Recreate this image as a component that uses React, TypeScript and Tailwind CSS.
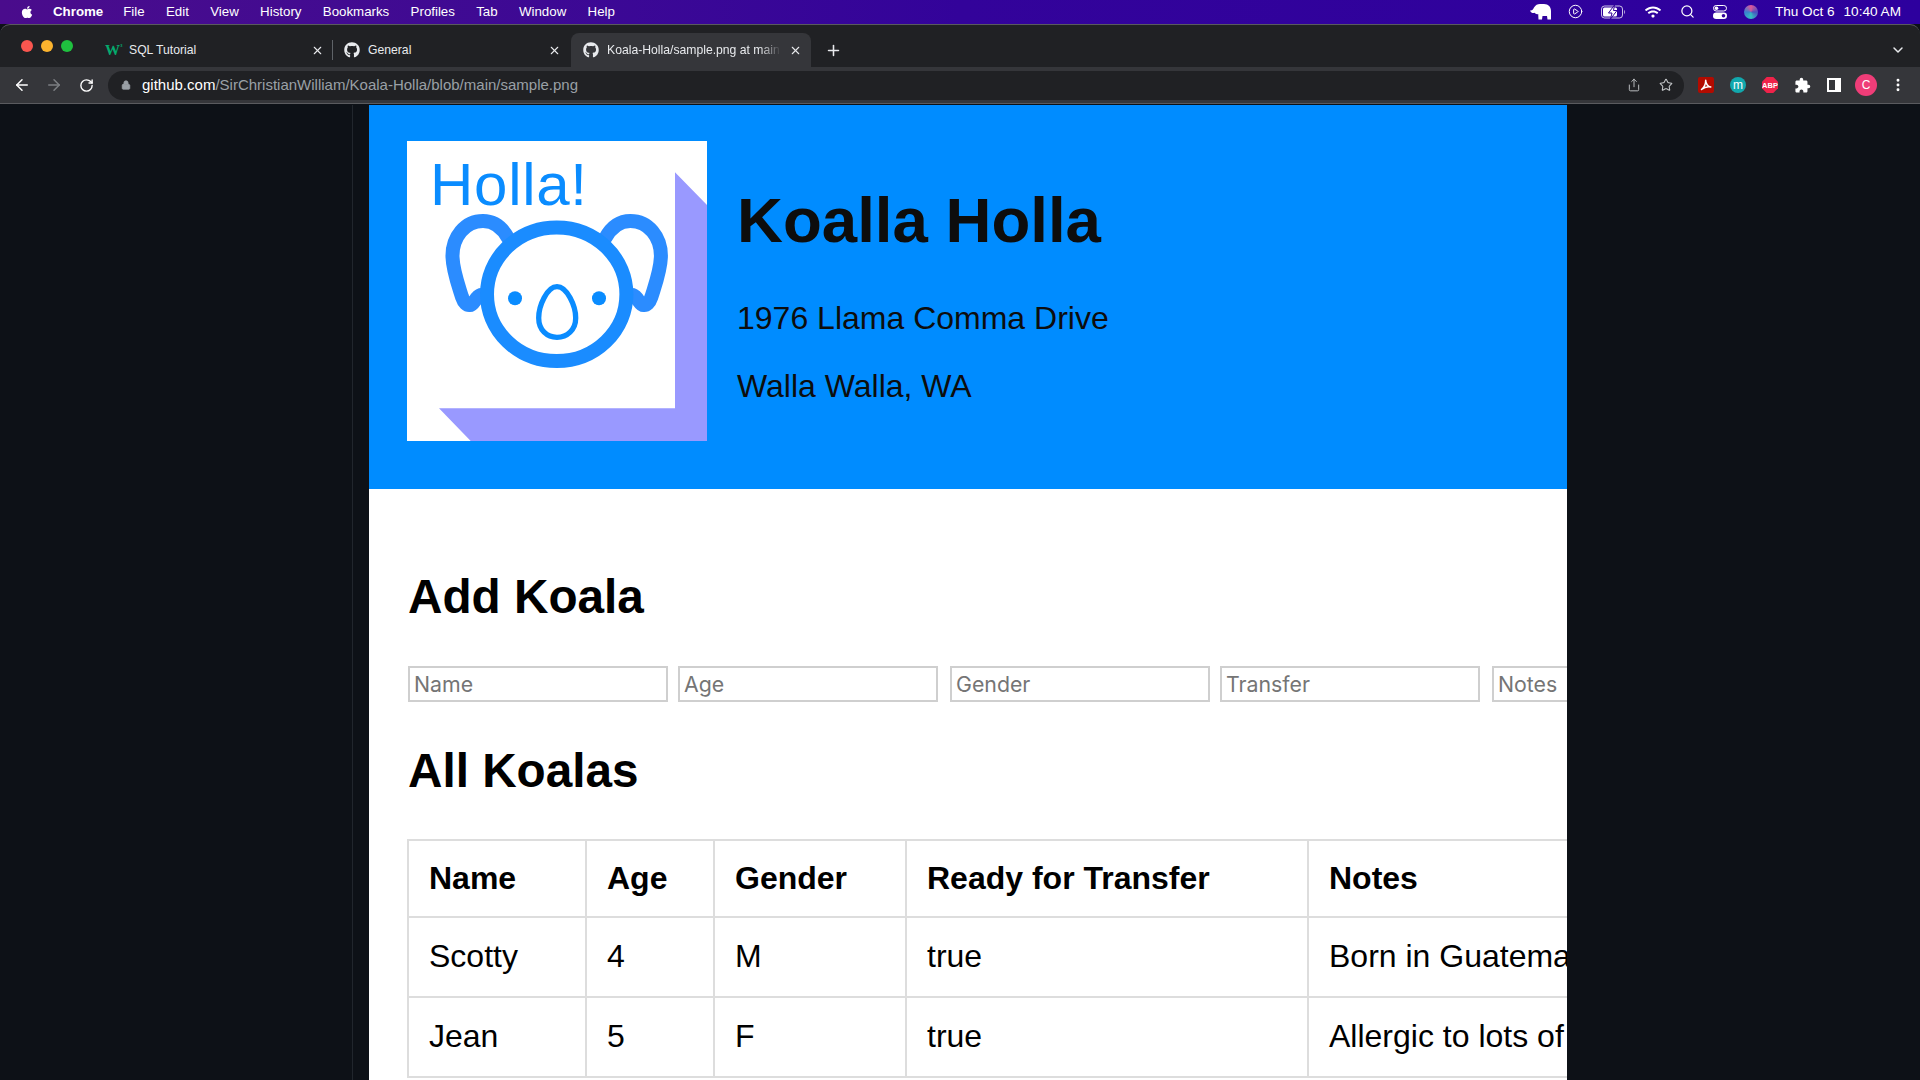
import { ArrowLeft, ArrowRight, ChevronDown, CirclePlay, Lock, MoreVertical, Plus, RotateCw, Search, Share, Star, X } from 'lucide-react'
import { FaApple, FaGithub, FaWifi } from 'react-icons/fa'
import { MdExtension } from 'react-icons/md'

const MENU = ['File', 'Edit', 'View', 'History', 'Bookmarks', 'Profiles', 'Tab', 'Window', 'Help']

const ROWS = [
  ['Scotty', '4', 'M', 'true', 'Born in Guatemala'],
  ['Jean', '5', 'F', 'true', 'Allergic to lots of lava'],
]

function Elephant() {
  return (
    <svg width="21" height="17" viewBox="0 0 21 17" fill="white">
      <path d="M0 7.500 C2 8 3 6.500 4 4.500 C5.500 2 7.500 1 10 1 L14 1 C18.500 1 21 4 21 8 L21 16.500 L17.500 16.500 L17 13 L12.500 13 L12 16.500 L8.500 16.500 L8.200 11 C6.800 11.500 5.500 11 4.500 9.800 C3 10.500 1 9.800 0 7.500Z" />
    </svg>
  )
}

function Battery() {
  return (
    <svg width="25" height="14" viewBox="0 0 25 14" fill="none">
      <rect x="0.500" y="1" width="21" height="12" rx="3" stroke="white" strokeOpacity="0.75" />
      <rect x="2" y="2.500" width="14" height="9" rx="1.500" fill="white" />
      <path d="M23 5 C24.500 5.500 24.500 8.500 23 9Z" fill="white" fillOpacity="0.6" />
      <path d="M13.500 0 L7.500 8 L11 8 L9.500 14 L16 5.500 L12.500 5.500Z" fill="white" stroke="#33039a" strokeWidth="1" />
    </svg>
  )
}

function ControlCenter() {
  return (
    <svg width="14" height="14" viewBox="0 0 14 14">
      <rect x="0.500" y="0.500" width="13" height="5.500" rx="2.700" fill="none" stroke="white" />
      <circle cx="3.500" cy="3.200" r="1.800" fill="white" />
      <rect x="0" y="7.500" width="14" height="6.500" rx="3.200" fill="white" />
      <circle cx="10.500" cy="10.700" r="1.800" fill="#33039a" />
    </svg>
  )
}

function W3Icon() {
  return (
    <span className="mr-[8px] flex w-[16px] shrink-0 items-start font-['Liberation_Serif',serif] font-bold leading-none text-[#04aa6d]">
      <span className="text-[15px] tracking-[-1px]">W</span>
      <span className="ml-[1px] text-[5px]">3</span>
    </span>
  )
}

function PdfIcon() {
  return (
    <svg width="16" height="16" viewBox="0 0 16 16" className="ml-[14px] shrink-0">
      <rect width="16" height="16" rx="2" fill="#b30b00" />
      <path d="M3.500 12.500 C6 10.500 7.700 6.500 7.700 3.200 C7.700 6.500 9.800 9.600 12.800 10 C10 9.500 6 10.500 3.500 12.500Z" fill="none" stroke="white" strokeWidth="1.500" strokeLinejoin="round" />
    </svg>
  )
}

function AbpIcon() {
  return (
    <svg width="16" height="16" viewBox="0 0 16 16" className="ml-[16px] shrink-0">
      <polygon points="4.700,0 11.300,0 16,4.700 16,11.300 11.300,16 4.700,16 0,11.300 0,4.700" fill="#f0234a" />
      <text x="8" y="10.800" textAnchor="middle" fontSize="7.500" fontWeight="700" fill="white" fontFamily="Liberation Sans, sans-serif">ABP</text>
    </svg>
  )
}

function Koala() {
  const ear = 'M101 97 C95 86 86 80 76 80 C58 80 45 96 45.500 116 C46 130 51 143 55 156 C57 162 60 164.500 63 164 C67 164 68 156 74 154'
  return (
    <svg width="300" height="300" viewBox="0 0 300 300" className="shrink-0 bg-white">
      <path d="M268 31.300 L300 64 L300 300 L63.700 300 L32 267.300 L268 267.300Z" fill="#9999ff" />
      <text x="23" y="64" fontSize="60" fill="#0a8cff" fontFamily="Liberation Sans, sans-serif" textLength="157">Holla!</text>
      <g fill="none" stroke="#2b8cff" strokeWidth="14" strokeLinecap="round">
        <path d={ear} />
        <path d={ear} transform="matrix(-1 0 0 1 299.400 0)" />
        <ellipse cx="149.700" cy="153.300" rx="69.700" ry="66.800" stroke="#1a8cff" strokeLinecap="butt" />
        <path d="M150 145.700 C160 145.700 168.700 165 168.700 177 C168.700 189 160 196.300 150 196.300 C140 196.300 131.700 189 131.700 177 C131.700 165 140 145.700 150 145.700Z" stroke="#0a8cff" strokeWidth="5.300" />
      </g>
      <circle cx="108" cy="157.300" r="7" fill="#0a8cff" />
      <circle cx="192" cy="157.300" r="7" fill="#0a8cff" />
    </svg>
  )
}

export default function App() {
  return (
    <div className="flex h-screen w-[1920px] flex-col overflow-hidden bg-[#0d1117] font-['Liberation_Sans',sans-serif]">
      {/* mac menu bar */}
      <div className="flex h-6 shrink-0 items-center bg-gradient-to-r from-[#4a0c8c] via-[#33039a] to-[#2d009e] text-[13.3px] text-white">
        <FaApple className="ml-[20px] mr-[19px] size-[14px] shrink-0" />
        <span className="mr-[20px] font-bold">Chrome</span>
        <div className="flex gap-[21.3px]">
          {MENU.map((m) => (
            <span key={m}>{m}</span>
          ))}
        </div>
        <div className="ml-auto flex items-center pr-[19px]">
          <Elephant />
          <CirclePlay className="ml-[17px] size-[15px]" strokeWidth={1.6} />
          <div className="ml-[18px]"><Battery /></div>
          <FaWifi className="ml-[19px] size-[16px]" />
          <Search className="ml-[19px] size-[15px]" strokeWidth={2} />
          <div className="ml-[18px]"><ControlCenter /></div>
          <div className="ml-[17px] size-[14px] rounded-full bg-[conic-gradient(#e0559a,#4a4fc0,#35c0c0,#3a7fd0,#e0559a)]" />
          <span className="ml-[17px] text-[13.6px]">Thu Oct 6</span>
          <span className="ml-[9px] text-[13.6px]">10:40 AM</span>
        </div>
      </div>

      {/* chrome tab strip */}
      <div className="flex h-[43px] shrink-0 items-end rounded-t-[10px] border-t border-[#5a5a5e] bg-[#202124] text-[12.2px] text-[#e8eaed]">
        <div className="flex h-[34px] w-full items-center">
          <div className="mb-[8px] ml-[21px] flex gap-2">
            <div className="size-3 rounded-full bg-[#f9564f]" />
            <div className="size-3 rounded-full bg-[#fbb32e]" />
            <div className="size-3 rounded-full bg-[#1fc13f]" />
          </div>
          <div className="ml-[32px] flex h-full w-[219px] items-center">
            <W3Icon />
            <span>SQL Tutorial</span>
            <X className="ml-auto size-[13px]" strokeWidth={2} />
          </div>
          <div className="ml-[8px] h-[20px] w-px bg-[#5f6368]" />
          <div className="ml-[11px] flex h-full w-[217px] items-center">
            <FaGithub className="mr-[8px] size-4 shrink-0" />
            <span>General</span>
            <X className="ml-auto size-[13px]" strokeWidth={2} />
          </div>
          <div className="ml-[10px] flex h-full w-[240px] items-center rounded-t-[8px] bg-[#35363a] pl-[12px]">
            <FaGithub className="mr-[8px] size-4 shrink-0" />
            <span className="w-[174px] overflow-hidden whitespace-nowrap [mask-image:linear-gradient(to_right,black_88%,transparent)]">Koala-Holla/sample.png at main</span>
            <X className="ml-[8px] size-[13px] shrink-0" strokeWidth={2} />
          </div>
          <Plus className="ml-[14px] size-[17px]" strokeWidth={2.2} />
          <ChevronDown className="ml-auto mr-[14px] size-[16px]" strokeWidth={2.2} />
        </div>
      </div>

      {/* toolbar */}
      <div className="flex h-[37px] shrink-0 items-center border-b border-[#5a5b5f] bg-[#35363a] text-[#c4c7c9]">
        <ArrowLeft className="ml-[13px] size-[18px] text-white" strokeWidth={2} />
        <ArrowRight className="ml-[14px] size-[18px] text-[#7c7f83]" strokeWidth={2} />
        <RotateCw className="ml-[16px] size-[15px] text-white" strokeWidth={2.2} />
        <div className="ml-[14px] flex h-[29px] w-[1576px] items-center rounded-full bg-[#202124]">
          <Lock className="ml-[13px] size-[10px] fill-[#9aa0a6] text-[#9aa0a6]" strokeWidth={2} />
          <span className="ml-[11px] text-[15px] text-white">github.com<span className="text-[#9aa0a6]">/SirChristianWilliam/Koala-Holla/blob/main/sample.png</span></span>
          <Share className="ml-auto size-[14px]" strokeWidth={1.6} />
          <Star className="ml-[18px] mr-[11px] size-[14px]" strokeWidth={1.8} />
        </div>
        <PdfIcon />
        <div className="ml-[16px] flex size-4 items-center justify-center rounded-full bg-[#12a8ad] text-[12px] leading-none text-white">m</div>
        <AbpIcon />
        <MdExtension className="ml-[16px] size-[17px] shrink-0 text-white" />
        <div className="ml-[16px] flex h-[14px] w-[14px] justify-end border-2 border-white bg-transparent">
          <div className="h-full w-[4px] bg-white" />
        </div>
        <div className="ml-[14px] flex size-[22px] items-center justify-center rounded-full bg-[#ef3d78] text-[12px] text-white">C</div>
        <MoreVertical className="ml-[13px] size-[16px] text-white" strokeWidth={2.4} />
      </div>
      <div className="h-px shrink-0 bg-[#0d1117]" />

      {/* github page, image viewer */}
      <div className="flex min-h-0 flex-1">
        <div className="w-[369px] shrink-0">
          <div className="ml-[352px] h-full w-px bg-[#21262d]" />
        </div>
        <div className="w-[1198px] shrink-0 overflow-hidden bg-white text-black">
          <header className="flex h-[384px] items-start bg-[#008cff] pl-[38px] pt-[36px] text-[#0d0d0d]">
            <Koala />
            <div className="ml-[30px] mt-[42px]">
              <h1 className="text-[63.6px] font-bold leading-[74px]">Koalla Holla</h1>
              <p className="mt-[43px] whitespace-nowrap text-[32px] leading-[37px]">1976 Llama Comma Drive</p>
              <p className="mt-[31px] whitespace-nowrap text-[32px] leading-[37px]">Walla Walla, WA</p>
            </div>
          </header>
          <div className="pl-[39px]">
            <h2 className="mt-[80px] text-[47.7px] font-bold leading-[55px]">Add Koala</h2>
            <div className="mt-[42px] flex w-[1400px]">
              {['Name', 'Age', 'Gender', 'Transfer', 'Notes'].map((p, i) => (
                <input
                  key={p}
                  placeholder={p}
                  readOnly
                  className={`h-9 w-[260px] shrink-0 border-2 border-[#cfcfcf] px-1 font-['Inter',sans-serif] text-[21.300px] placeholder:text-[#757575] ${i === 0 ? '' : i % 2 ? 'ml-[10px]' : 'ml-[12px]'}`}
                />
              ))}
            </div>
            <h2 className="mt-[41px] text-[47.7px] font-bold leading-[55px]">All Koalas</h2>
            <table className="-ml-px mt-[41px] w-[1400px] table-fixed border-collapse text-left text-[32px]">
              <colgroup>
                <col className="w-[178px]" />
                <col className="w-[128px]" />
                <col className="w-[192px]" />
                <col className="w-[402px]" />
                <col />
              </colgroup>
              <thead>
                <tr className="h-[77px]">
                  {['Name', 'Age', 'Gender', 'Ready for Transfer', 'Notes'].map((h) => (
                    <th key={h} className="border-2 border-[#ddd] px-[20px] pb-[2px] font-bold">{h}</th>
                  ))}
                </tr>
              </thead>
              <tbody>
                {ROWS.map((r) => (
                  <tr key={r[0]} className="h-[80px]">
                    {r.map((c) => (
                      <td key={c} className="whitespace-nowrap border-2 border-[#ddd] px-[20px] pb-[2px]">{c}</td>
                    ))}
                  </tr>
                ))}
              </tbody>
            </table>
          </div>
        </div>
      </div>
    </div>
  )
}
